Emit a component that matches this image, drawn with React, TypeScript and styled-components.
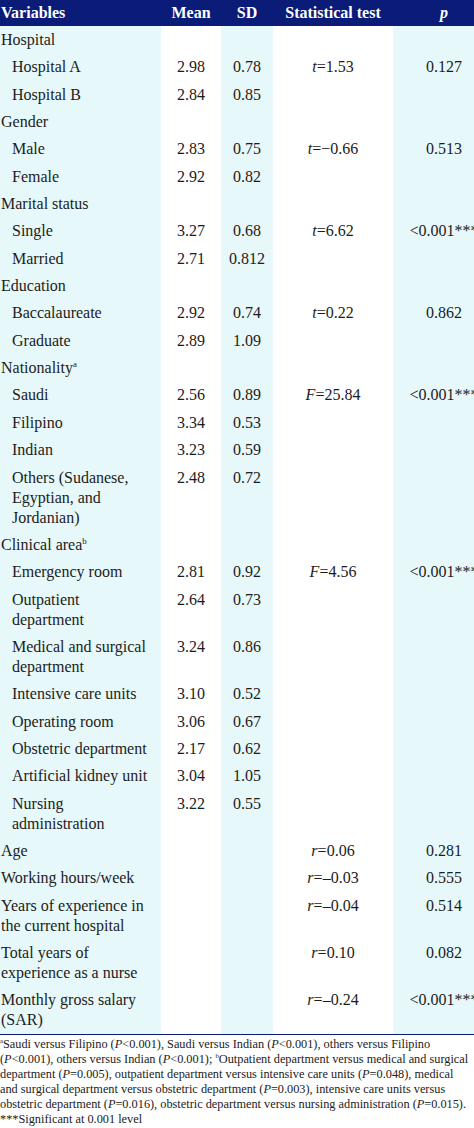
import React from "react";
import styled, { createGlobalStyle } from "styled-components";

const NAVY = "#0a1b78";
const CYAN = "#e7f8fa";

const GlobalStyle = createGlobalStyle`
  html, body {
    margin: 0;
    padding: 0;
    background: #ffffff;
    overflow-x: hidden;
  }
  body {
    font-family: "Liberation Serif", "Times New Roman", serif;
    color: #1c1c1c;
  }
`;

const Page = styled.div`
  width: 474px;
  overflow: hidden;
`;

const Table = styled.table`
  table-layout: fixed;
  width: 495px;
  border-collapse: collapse;
  border-bottom: 1.5px solid ${NAVY};
  font-size: 16px;
  line-height: 20px;
`;

const Col = styled.col<{ $w: number; $tint?: boolean }>`
  width: ${(p) => p.$w}px;
  background: ${(p) => (p.$tint ? CYAN : "#ffffff")};
`;

const Head = styled.th<{ $left?: boolean }>`
  background: ${NAVY};
  color: #ffffff;
  font-weight: bold;
  height: 25px;
  padding: 0 0 1px ${(p) => (p.$left ? "1px" : "0")};
  text-align: ${(p) => (p.$left ? "left" : "center")};
  vertical-align: middle;
  line-height: 20px;
`;

const Cell = styled.td`
  padding: 4px 0 3.35px;
  text-align: center;
  vertical-align: top;
  white-space: nowrap;
`;

const Label = styled.td<{ $sub?: boolean }>`
  padding: 4px 9px 3.35px ${(p) => (p.$sub ? "12px" : "1px")};
  text-align: left;
  vertical-align: top;
`;

const Ital = styled.i`
  font-style: italic;
`;

const Sup = styled.sup`
  font-size: 0.55em;
  line-height: 0;
  vertical-align: 0.7em;
`;

const Notes = styled.p`
  margin: 2px 0 0;
  font-size: 12.3px;
  line-height: 15px;
  color: #222222;
`;

type Row = {
  label: React.ReactNode;
  sub?: boolean;
  mean?: string;
  sd?: string;
  test?: React.ReactNode;
  p?: string;
};

const T = ({ v, value }: { v: string; value: string }) => (
  <>
    <Ital>{v}</Ital>={value}
  </>
);

const rows: Row[] = [
  { label: "Hospital" },
  { label: "Hospital A", sub: true, mean: "2.98", sd: "0.78", test: <T v="t" value="1.53" />, p: "0.127" },
  { label: "Hospital B", sub: true, mean: "2.84", sd: "0.85" },
  { label: "Gender" },
  { label: "Male", sub: true, mean: "2.83", sd: "0.75", test: <T v="t" value="−0.66" />, p: "0.513" },
  { label: "Female", sub: true, mean: "2.92", sd: "0.82" },
  { label: "Marital status" },
  { label: "Single", sub: true, mean: "3.27", sd: "0.68", test: <T v="t" value="6.62" />, p: "<0.001***" },
  { label: "Married", sub: true, mean: "2.71", sd: "0.812" },
  { label: "Education" },
  { label: "Baccalaureate", sub: true, mean: "2.92", sd: "0.74", test: <T v="t" value="0.22" />, p: "0.862" },
  { label: "Graduate", sub: true, mean: "2.89", sd: "1.09" },
  { label: <>Nationality<Sup>a</Sup></> },
  { label: "Saudi", sub: true, mean: "2.56", sd: "0.89", test: <T v="F" value="25.84" />, p: "<0.001***" },
  { label: "Filipino", sub: true, mean: "3.34", sd: "0.53" },
  { label: "Indian", sub: true, mean: "3.23", sd: "0.59" },
  { label: "Others (Sudanese, Egyptian, and Jordanian)", sub: true, mean: "2.48", sd: "0.72" },
  { label: <>Clinical area<Sup>b</Sup></> },
  { label: "Emergency room", sub: true, mean: "2.81", sd: "0.92", test: <T v="F" value="4.56" />, p: "<0.001***" },
  { label: "Outpatient department", sub: true, mean: "2.64", sd: "0.73" },
  { label: "Medical and surgical department", sub: true, mean: "3.24", sd: "0.86" },
  { label: "Intensive care units", sub: true, mean: "3.10", sd: "0.52" },
  { label: "Operating room", sub: true, mean: "3.06", sd: "0.67" },
  { label: "Obstetric department", sub: true, mean: "2.17", sd: "0.62" },
  { label: "Artificial kidney unit", sub: true, mean: "3.04", sd: "1.05" },
  { label: "Nursing administration", sub: true, mean: "3.22", sd: "0.55" },
  { label: "Age", test: <T v="r" value="0.06" />, p: "0.281" },
  { label: "Working hours/week", test: <T v="r" value="–0.03" />, p: "0.555" },
  { label: "Years of experience in the current hospital", test: <T v="r" value="–0.04" />, p: "0.514" },
  { label: "Total years of experience as a nurse", test: <T v="r" value="0.10" />, p: "0.082" },
  { label: "Monthly gross salary (SAR)", test: <T v="r" value="–0.24" />, p: "<0.001***" },
];

export default function App() {
  return (
    <>
      <GlobalStyle />
      <Page>
        <Table>
          <colgroup>
            <Col $w={161} $tint />
            <Col $w={60} />
            <Col $w={52} $tint />
            <Col $w={120} />
            <Col $w={102} $tint />
          </colgroup>
          <thead>
            <tr>
              <Head $left>Variables</Head>
              <Head>Mean</Head>
              <Head>SD</Head>
              <Head>Statistical test</Head>
              <Head>
                <Ital>p</Ital>
              </Head>
            </tr>
          </thead>
          <tbody>
            {rows.map((r, i) => (
              <tr key={i}>
                <Label $sub={r.sub}>{r.label}</Label>
                <Cell>{r.mean}</Cell>
                <Cell>{r.sd}</Cell>
                <Cell>{r.test}</Cell>
                <Cell>{r.p}</Cell>
              </tr>
            ))}
          </tbody>
        </Table>
        <Notes>
          <Sup>a</Sup>Saudi versus Filipino (<Ital>P</Ital>&lt;0.001), Saudi versus Indian (
          <Ital>P</Ital>&lt;0.001), others versus Filipino (<Ital>P</Ital>&lt;0.001), others
          versus Indian (<Ital>P</Ital>&lt;0.001); <Sup>b</Sup>Outpatient department versus
          medical and surgical department (<Ital>P</Ital>=0.005), outpatient department versus
          intensive care units (<Ital>P</Ital>=0.048), medical and surgical department versus
          obstetric department (<Ital>P</Ital>=0.003), intensive care units versus obstetric
          department (<Ital>P</Ital>=0.016), obstetric department versus nursing administration (
          <Ital>P</Ital>=0.015).
          <br />
          ***Significant at 0.001 level
        </Notes>
      </Page>
    </>
  );
}
